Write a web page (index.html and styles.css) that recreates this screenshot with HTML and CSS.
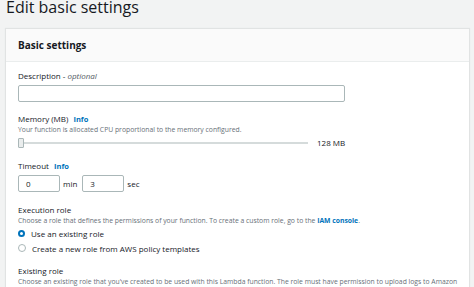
FILE: index.html
```html
<!DOCTYPE html>
<html>
<head>
<meta charset="utf-8">
<link rel="stylesheet" href="styles.css">
</head>
<body>
<div class="page">
  <h1 class="title">Edit basic settings</h1>
  <div class="card">
    <div class="card-header"><h2>Basic settings</h2></div>
    <div class="card-body">
      <div class="field">
        <div class="label">Description - <i>optional</i></div>
        <div class="input wide"></div>
      </div>
      <div class="field field-memory">
        <div class="label">Memory (MB) <span class="info">Info</span></div>
        <div class="hint">Your function is allocated CPU proportional to the memory configured.</div>
        <div class="slider-row">
          <div class="slider"><div class="handle"></div><div class="track"></div></div>
          <span class="value">128 MB</span>
        </div>
      </div>
      <div class="field field-timeout">
        <div class="label">Timeout <span class="info">Info</span></div>
        <div class="timeout-row">
          <div class="input small">0</div><span class="unit">min</span>
          <div class="input small">3</div><span class="unit">sec</span>
        </div>
      </div>
      <div class="field field-role">
        <div class="label">Execution role</div>
        <div class="hint">Choose a role that defines the permissions of your function. To create a custom role, go to the <span class="link">IAM console</span>.</div>
        <div class="radios">
          <div class="radio-row"><span class="radio checked"></span>Use an existing role</div>
          <div class="radio-row"><span class="radio"></span>Create a new role from AWS policy templates</div>
        </div>
      </div>
      <div class="field">
        <div class="label">Existing role</div>
        <div class="hint nowrap">Choose an existing role that you've created to be used with this Lambda function. The role must have permission to upload logs to Amazon</div>
      </div>
    </div>
  </div>
</div>
</body>
</html>
```
FILE: styles.css
```css
html, body { margin: 0; padding: 0; }
body {
  background: #f2f3f3;
  font-family: "Open Sans", "Noto Sans", sans-serif;
  color: #16191f;
  width: 474px;
  height: 287px;
  overflow: hidden;
}
.page { padding: 0 4px 0 6px; }
.title {
  margin: -1px 0 0 0;
  font-size: 16px;
  font-weight: 400;
  line-height: 16px;
  color: #16191f;
}
.card {
  margin-top: 14px;
  background: #fff;
  box-shadow: 0 0 1px 1px #e1e3e3;
  width: 463px;
}
.card-header {
  background: #fafafa;
  border-bottom: 1px solid #eaeded;
  height: 32px;
  display: flex;
  align-items: center;
  padding-left: 12px;
}
.card-header h2 {
  margin: 0;
  font-size: 10px;
  font-weight: 700;
}
.card-body { padding: 8px 12px 0 12px; }
.field { margin-bottom: 11px; }
.field-memory { margin-bottom: 12px; }
.field-timeout { margin-bottom: 12px; }
.field-role { margin-bottom: 10px; }
.label { font-size: 8px; line-height: 12px; color: #16191f; }
.label i { color: #545b64; }
.info { color: #0073bb; font-weight: 700; font-size: 7.5px; margin-left: 3px; }
.hint { font-size: 6.8px; line-height: 10px; color: #687078; }
.nowrap { white-space: nowrap; }
.link { color: #0073bb; font-weight: 700; }
.input {
  border: 1px solid #aab7b8;
  border-radius: 2px;
  background: #fff;
  box-sizing: border-box;
  height: 17px;
  font-size: 8px;
  line-height: 15px;
  padding-left: 7px;
}
.input.wide { width: 327px; margin-top: 3px; }
.slider-row { display: flex; align-items: center; margin-top: 2px; }
.slider { display: flex; align-items: center; width: 290px; }
.handle {
  width: 4px; height: 8px;
  border: 1px solid #aab7b8;
  border-radius: 1px;
  background: #eaeded;
}
.track { flex: 1; height: 2px; background: #d5dbdb; }
.value { font-size: 8px; margin-left: 9px; color: #16191f; }
.timeout-row { display: flex; align-items: center; margin-top: 3px; }
.input.small { width: 42px; height: 17px; }
.unit { font-size: 8px; margin: 0 5px 0 3px; }
.radios { display: flex; flex-direction: column; gap: 1px; }
.radio-row { display: flex; align-items: center; font-size: 8px; height: 14px; }
.radio {
  width: 6px; height: 6px;
  border: 1px solid #aab7b8;
  border-radius: 50%;
  margin: 0 6px 0 0;
  box-sizing: content-box;
}
.radio.checked { border: 2.5px solid #0073bb; width: 3px; height: 3px; }
```
